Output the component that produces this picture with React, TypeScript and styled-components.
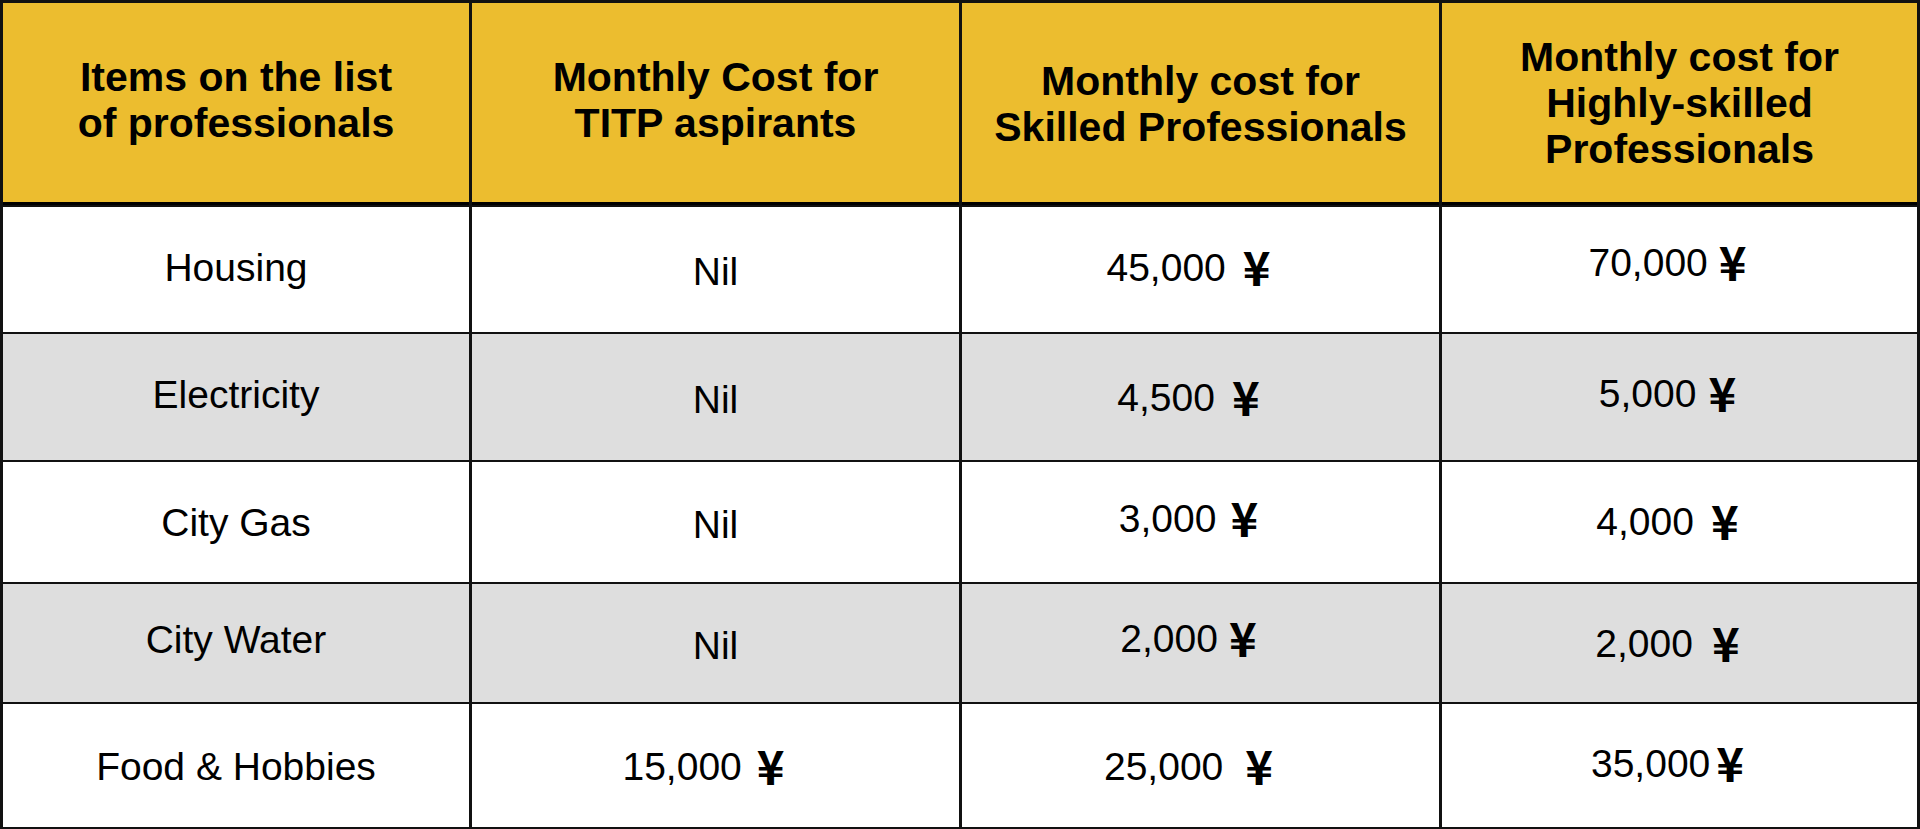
import styled, { createGlobalStyle } from "styled-components";

const GlobalStyle = createGlobalStyle`
  html, body {
    margin: 0;
    padding: 0;
    background: #ffffff;
    overflow: hidden;
  }
  body {
    font-family: "Liberation Sans", Arial, Helvetica, sans-serif;
    color: #000000;
  }
`;

const CostTable = styled.div`
  display: grid;
  grid-template-columns: 466px 487px 477px 475px;
  grid-template-rows: 202px 125px 126px 120px 118px 123px;
  column-gap: 3px;
  row-gap: 2px;
  padding: 3px 3px 2px 3px;
  width: 1920px;
  height: 829px;
  box-sizing: border-box;
  background: #111111;
`;

const HeadCell = styled.div<{ $dy?: number }>`
  display: flex;
  align-items: center;
  justify-content: center;
  box-sizing: border-box;
  border-bottom: 3px solid #000000;
  padding-top: ${(p) => Math.max(0, (p.$dy ?? 0) * 2)}px;
  padding-bottom: ${(p) => Math.max(0, -(p.$dy ?? 0) * 2)}px;
  background: #ecbd2f;
  font-size: 41px;
  font-weight: 700;
  line-height: 46px;
  text-align: center;
`;

const BodyCell = styled.div<{ $shade: boolean; $dy?: number; $price?: boolean }>`
  display: flex;
  align-items: center;
  justify-content: center;
  box-sizing: border-box;
  padding-top: ${(p) => Math.max(0, (p.$dy ?? 0) * 2)}px;
  padding-bottom: ${(p) => Math.max(0, -(p.$dy ?? 0) * 2)}px;
  padding-right: ${(p) => (p.$price ? 24 : 0)}px;
  background: ${(p) => (p.$shade ? "#dedede" : "#ffffff")};
  font-size: 39px;
  line-height: 1;
`;

const Amount = styled.span`
  display: inline-flex;
  align-items: baseline;
`;

const Yen = styled.span<{ $gap: number }>`
  margin-left: ${(p) => p.$gap}px;
  font-family: "Noto Sans CJK JP", "Liberation Sans", sans-serif;
  font-weight: 700;
  font-size: 47px;
  line-height: 1;
  position: relative;
  top: 5px;
`;

type Price = { n: string; gap: number; dy?: number };
type Row = { item: string; itemDy?: number; titp: Price | "Nil"; skilled: Price; high: Price };

const headers = [
  { text: ["Items on the list", "of professionals"], dy: -3 },
  { text: ["Monthly Cost for", "TITP aspirants"], dy: -3 },
  { text: ["Monthly cost for", "Skilled Professionals"], dy: 1 },
  { text: ["Monthly cost for", "Highly-skilled", "Professionals"], dy: 0 },
];

const rows: Row[] = [
  {
    item: "Housing",
    itemDy: -2,
    titp: "Nil",
    skilled: { n: "45,000", gap: 17, dy: -8 },
    high: { n: "70,000", gap: 11, dy: -13 },
  },
  {
    item: "Electricity",
    itemDy: -3,
    titp: "Nil",
    skilled: { n: "4,500", gap: 17, dy: -5 },
    high: { n: "5,000", gap: 12, dy: -9 },
  },
  {
    item: "City Gas",
    titp: "Nil",
    skilled: { n: "3,000", gap: 14, dy: -9 },
    high: { n: "4,000", gap: 17, dy: -6 },
  },
  {
    item: "City Water",
    itemDy: -4,
    titp: "Nil",
    skilled: { n: "2,000", gap: 11, dy: -10 },
    high: { n: "2,000", gap: 19, dy: -5 },
  },
  {
    item: "Food & Hobbies",
    itemDy: 1,
    titp: { n: "15,000", gap: 15, dy: -5 },
    skilled: { n: "25,000", gap: 22, dy: -5 },
    high: { n: "35,000", gap: 6, dy: -8 },
  },
];

function PriceCell({ price, shade }: { price: Price | "Nil"; shade: boolean }) {
  if (price === "Nil") {
    return (
      <BodyCell $shade={shade} $dy={2}>
        Nil
      </BodyCell>
    );
  }
  return (
    <BodyCell $shade={shade} $dy={price.dy} $price>
      <Amount>
        {price.n}
        <Yen $gap={price.gap}>¥</Yen>
      </Amount>
    </BodyCell>
  );
}

export default function App() {
  return (
    <>
      <GlobalStyle />
      <CostTable>
        {headers.map((h) => (
          <HeadCell key={h.text.join(" ")} $dy={h.dy}>
            <div>
              {h.text.map((line) => (
                <div key={line}>{line}</div>
              ))}
            </div>
          </HeadCell>
        ))}
        {rows.map((r, i) => {
          const shade = i % 2 === 1;
          return [
            <BodyCell key={r.item} $shade={shade} $dy={r.itemDy}>
              {r.item}
            </BodyCell>,
            <PriceCell key={r.item + "-titp"} price={r.titp} shade={shade} />,
            <PriceCell key={r.item + "-skilled"} price={r.skilled} shade={shade} />,
            <PriceCell key={r.item + "-high"} price={r.high} shade={shade} />,
          ];
        })}
      </CostTable>
    </>
  );
}
